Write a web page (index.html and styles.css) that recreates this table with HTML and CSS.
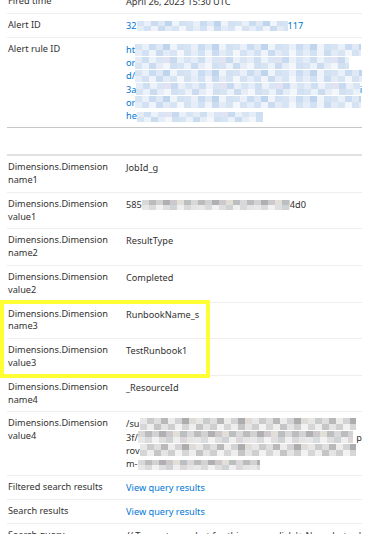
FILE: index.html
```html
<!DOCTYPE html>
<html lang="en">
<head>
<meta charset="utf-8">
<title>Alert details</title>
<link rel="stylesheet" href="styles.css">
</head>
<body>
<div class="panel">
  <div class="row">
    <div class="label">Fired time</div>
    <div class="value"><div class="vline">April 26, 2023 15:30 UTC</div></div>
  </div>
  <div class="row">
    <div class="label">Alert ID</div>
    <div class="value link">
      <div class="vline">32<span class="blur m-blue b-aid"></span>117</div>
    </div>
  </div>
  <div class="row row-strong">
    <div class="label">Alert rule ID</div>
    <div class="value link">
      <div class="vline">ht<span class="blur tall m-blue b-fill end-1"></span></div>
      <div class="vline">or<span class="blur tall m-blue2 b-fill end-13"></span></div>
      <div class="vline">d/<span class="blur tall m-blue b-fill"></span></div>
      <div class="vline">3a<span class="blur tall m-blue2 b-fill"></span>i</div>
      <div class="vline">or<span class="blur tall m-blue b-fill end-1"></span></div>
      <div class="vline">he<span class="blur m-blue2 b-r6"></span></div>
    </div>
  </div>

  <div class="spacer"></div>

  <div class="section">
    <div class="row">
      <div class="label">Dimensions.Dimension name1</div>
      <div class="value"><div class="vline">JobId_g</div></div>
    </div>
    <div class="row">
      <div class="label">Dimensions.Dimension value1</div>
      <div class="value"><div class="vline">585<span class="blur m-gray b-v1"></span>4d0</div></div>
    </div>
    <div class="row">
      <div class="label">Dimensions.Dimension name2</div>
      <div class="value"><div class="vline">ResultType</div></div>
    </div>
    <div class="row">
      <div class="label">Dimensions.Dimension value2</div>
      <div class="value"><div class="vline">Completed</div></div>
    </div>
    <div class="highlight">
      <div class="row">
        <div class="label">Dimensions.Dimension name3</div>
        <div class="value"><div class="vline">RunbookName_s</div></div>
      </div>
      <div class="row">
        <div class="label">Dimensions.Dimension value3</div>
        <div class="value"><div class="vline">TestRunbook1</div></div>
      </div>
    </div>
    <div class="row">
      <div class="label">Dimensions.Dimension name4</div>
      <div class="value"><div class="vline">_ResourceId</div></div>
    </div>
    <div class="row">
      <div class="label">Dimensions.Dimension value4</div>
      <div class="value">
        <div class="vline">/su<span class="blur tall m-gray2 b-fill end-6"></span></div>
        <div class="vline">3f/<span class="blur tall m-gray b-fill end-3"></span>p</div>
        <div class="vline">rov<span class="blur tall m-gray2 b-fill end-6"></span></div>
        <div class="vline">m-<span class="blur m-gray b-v4"></span></div>
      </div>
    </div>
    <div class="row">
      <div class="label">Filtered search results</div>
      <div class="value link"><div class="vline">View query results</div></div>
    </div>
    <div class="row">
      <div class="label">Search results</div>
      <div class="value link"><div class="vline">View query results</div></div>
    </div>
    <div class="row">
      <div class="label">Search query</div>
      <div class="value clip"><div class="vline">// To create an alert for this query, click '+ New alert rule'</div></div>
    </div>
  </div>
</div>
</body>
</html>
```
FILE: styles.css
```css
html, body {
  margin: 0;
  padding: 0;
  background: #ffffff;
  overflow: hidden;
}

body {
  font-family: "Noto Sans", "Open Sans", sans-serif;
  font-size: 9.2px;
  color: #323130;
}

.panel {
  margin: -10.3px 0 0 7px;
  width: 355px;
}

.row {
  display: grid;
  grid-template-columns: 118px 1fr;
  padding: 5px 0 5px 1px;
  border-bottom: 1px solid #efeeed;
}

.row-strong {
  border-bottom-color: #c8c6c4;
}

.label {
  line-height: 12.8px;
  padding-right: 8px;
}

.value {
  line-height: 13.2px;
  min-width: 0;
}

.vline {
  display: flex;
  align-items: center;
  height: 13.2px;
  white-space: nowrap;
}

.link {
  color: #0078d4;
}

.clip {
  overflow: hidden;
}

.spacer {
  height: 26px;
}

.section {
  border-top: 2px solid #e1e1e1;
}

.highlight {
  position: relative;
}

.highlight::after {
  content: "";
  position: absolute;
  left: -7px;
  top: -3px;
  width: 210px;
  bottom: -2px;
  box-sizing: border-box;
  border: 4.5px solid #ffff33;
  pointer-events: none;
}

/* pixelated (redacted) text */
.blur {
  display: inline-block;
  height: 10px;
  flex: none;
  margin-top: 2px;
}

.blur.tall {
  height: 12px;
  margin-top: 0;
}

.b-fill { flex: 1 1 auto; }
.b-aid { width: 151px; }
.b-v1 { width: 148px; }
.b-v4 { width: 122px; }
.b-r6 { width: 126px; }
.end-1 { margin-right: 1px; }
.end-3 { margin-right: 3px; }
.end-6 { margin-right: 6px; }
.end-13 { margin-right: 13px; }

.m-blue {
  background:
    linear-gradient(90deg, #d6e4f4 0 7px, #eaf0f9 7px 14px, #cadcf1 14px 21px, #dfe9f6 21px 28px, #bfd5ee 28px 35px, #eff4fa 35px 42px, #d3e2f3 42px 49px) 0 0 / 49px 50% repeat-x,
    linear-gradient(90deg, #e5edf8 0 7px, #d2e1f3 7px 14px, #f0f4fa 14px 21px, #cbdcf0 21px 28px, #e2ebf6 28px 35px, #d7e4f4 35px 42px, #f3f6fb 42px 49px, #d4e2f2 49px 56px) 0 100% / 56px 50% repeat-x;
}

.m-blue2 {
  background:
    linear-gradient(90deg, #e3ecf7 0 7px, #cfdff2 7px 14px, #edf2f9 14px 21px, #d8e5f4 21px 28px, #e2e3f2 28px 35px, #c8daf0 35px 42px, #eaf0f8 42px 49px, #d6e4f4 49px 56px) 0 0 / 56px 50% repeat-x,
    linear-gradient(90deg, #d7e4f3 0 7px, #ecf2f9 7px 14px, #cbdcf0 14px 21px, #e6edf7 21px 28px, #f3f6fb 28px 35px, #d2e1f2 35px 42px) 0 100% / 42px 50% repeat-x;
}

.m-gray {
  background:
    linear-gradient(90deg, #d8d8d8 0 7px, #bcbcbe 7px 14px, #d2d2d2 14px 21px, #b0b0b2 21px 28px, #cdc8cb 28px 35px, #e2ded8 35px 42px, #bbbfc0 42px 49px) 0 0 / 49px 50% repeat-x,
    linear-gradient(90deg, #e8e8e8 0 7px, #d9dbdc 7px 14px, #f2f2f2 14px 21px, #dfdfdf 21px 28px, #d0d3d5 28px 35px, #efefef 35px 42px, #dbd7da 42px 49px, #e5e5e5 49px 56px) 0 100% / 56px 50% repeat-x;
}

.m-gray2 {
  background:
    linear-gradient(90deg, #e7e7e7 0 7px, #cbcbcb 7px 14px, #dedede 14px 21px, #b9b9bb 21px 28px, #edecea 28px 35px, #d3d3d6 35px 42px, #adadaf 42px 49px, #e0dcd7 49px 56px) 0 0 / 56px 50% repeat-x,
    linear-gradient(90deg, #d6d6d6 0 7px, #eeeeee 7px 14px, #c5c5c7 14px 21px, #e4e4e4 21px 28px, #cfcfcf 28px 35px, #f2f2f2 35px 42px) 0 100% / 42px 50% repeat-x;
}
```
